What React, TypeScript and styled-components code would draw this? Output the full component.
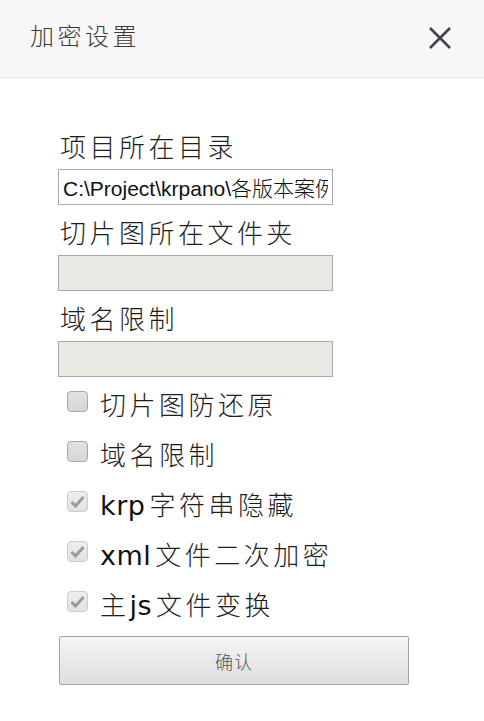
import React, { useState } from 'react';
import styled, { createGlobalStyle } from 'styled-components';

const GlobalStyle = createGlobalStyle`
  html, body {
    margin: 0;
    padding: 0;
    background: #fff;
  }
  body {
    font-family: "Noto Sans CJK SC", sans-serif;
  }
`;

const CJK = `"Noto Sans CJK SC", sans-serif`;

type Part = string | { latin: string };

const options: { key: string; label: Part[]; checked: boolean }[] = [
  { key: 'tile', label: ['切片图防还原'], checked: false },
  { key: 'domain', label: ['域名限制'], checked: false },
  { key: 'krp', label: [{ latin: 'krp' }, '字符串隐藏'], checked: true },
  { key: 'xml', label: [{ latin: 'xml' }, '文件二次加密'], checked: true },
  { key: 'js', label: ['主', { latin: 'js' }, '文件变换'], checked: true },
];

export default function App() {
  const [checks, setChecks] = useState<Record<string, boolean>>(
    Object.fromEntries(options.map((o) => [o.key, o.checked]))
  );
  const toggle = (key: string) => () =>
    setChecks((c) => ({ ...c, [key]: !c[key] }));

  return (
    <Page>
      <GlobalStyle />
      <Header>
        <Title>加密设置</Title>
        <Close aria-label="close">
          <svg width="24" height="24" viewBox="0 0 24 24">
            <path
              d="M2 2 L22 22 M22 2 L2 22"
              stroke="#40404a"
              strokeWidth="2.6"
            />
          </svg>
        </Close>
      </Header>
      <Body>
        <Label>项目所在目录</Label>
        <Field defaultValue="C:\Project\krpano\各版本案例" />
        <Label>切片图所在文件夹</Label>
        <Field disabled />
        <Label>域名限制</Label>
        <Field disabled />
        {options.map((o) => (
          <CheckRow key={o.key} onClick={toggle(o.key)}>
            <Box checked={checks[o.key]}>
              {checks[o.key] && (
                <svg width="15" height="13" viewBox="0 0 15 13">
                  <path
                    d="M1.5 7 L5.5 11 L13.5 2"
                    fill="none"
                    stroke="#9b9b9b"
                    strokeWidth="3"
                  />
                </svg>
              )}
            </Box>
            <CheckText>
              {o.label.map((part, i) =>
                typeof part === 'string' ? (
                  <span key={i}>{part}</span>
                ) : (
                  <Latin key={i}>{part.latin}</Latin>
                )
              )}
            </CheckText>
          </CheckRow>
        ))}
        <Confirm>确认</Confirm>
      </Body>
    </Page>
  );
}

const Page = styled.div`
  width: 484px;
  min-height: 721px;
  background: #fff;
`;

const Header = styled.div`
  height: 77px;
  background: #f7f7f7;
  border-bottom: 1px solid #e6e6e6;
  display: flex;
  align-items: center;
  justify-content: space-between;
  padding: 0 32px 0 30px;
`;

const Title = styled.div`
  font-family: ${CJK};
  font-weight: 300;
  font-size: 24px;
  letter-spacing: 3.5px;
  color: #3a3a3a;
  margin-top: -8px;
`;

const Close = styled.div`
  width: 24px;
  height: 24px;
  display: flex;
  margin-top: -2px;
  cursor: pointer;
`;

const Body = styled.div`
  display: flex;
  flex-direction: column;
  align-items: flex-start;
  padding: 50px 0 0 58px;
`;

const Label = styled.div`
  font-family: ${CJK};
  font-weight: 300;
  font-size: 26px;
  line-height: 36px;
  letter-spacing: 3.5px;
  color: #1e1e1e;
  padding-left: 2px;
  margin-top: 9px;

  &:first-child {
    margin-top: 0;
  }
`;

const Field = styled.input`
  box-sizing: border-box;
  width: 275px;
  height: 36px;
  margin: 5px 0 0;
  padding: 0 4px;
  border: 1px solid #a9a9a9;
  border-radius: 0;
  background: #fff;
  font-family: "Liberation Sans", "Noto Sans CJK SC", sans-serif;
  font-weight: 300;
  font-size: 21px;
  color: #111;
  outline: none;

  &:disabled {
    background: #ebe9e3;
  }
`;

const CheckRow = styled.label`
  display: flex;
  align-items: center;
  height: 50px;
  padding-left: 9px;
  cursor: pointer;

  &:first-of-type {
    margin-top: 1px;
  }
`;

const Box = styled.span<{ checked: boolean }>`
  box-sizing: border-box;
  width: 21px;
  height: 21px;
  margin-top: -4px;
  border-radius: 4px;
  border: 1px solid ${(p) => (p.checked ? '#cbcbcb' : '#a8a8a8')};
  background: ${(p) =>
    p.checked
      ? 'linear-gradient(#ededed, #e2e2e2)'
      : 'linear-gradient(#e2e2e2, #d6d6d6)'};
  display: flex;
  align-items: center;
  justify-content: center;
`;

const CheckText = styled.span`
  font-family: ${CJK};
  font-weight: 300;
  font-size: 26px;
  letter-spacing: 3.5px;
  color: #1e1e1e;
  margin-left: 12px;
`;

const Latin = styled.span`
  font-family: "DejaVu Sans", sans-serif;
  font-weight: 400;
  font-size: 27px;
  letter-spacing: 0.5px;
  color: #111;
  margin-right: 4px;
`;

const Confirm = styled.button`
  box-sizing: border-box;
  width: 350px;
  height: 49px;
  margin-top: 8px;
  margin-left: 1px;
  border: 1px solid #a3a3a3;
  border-radius: 2px;
  background: linear-gradient(#f5f5f5, #dedede);
  font-family: ${CJK};
  font-weight: 300;
  font-size: 18px;
  letter-spacing: 1px;
  color: #555;
  cursor: pointer;
`;
